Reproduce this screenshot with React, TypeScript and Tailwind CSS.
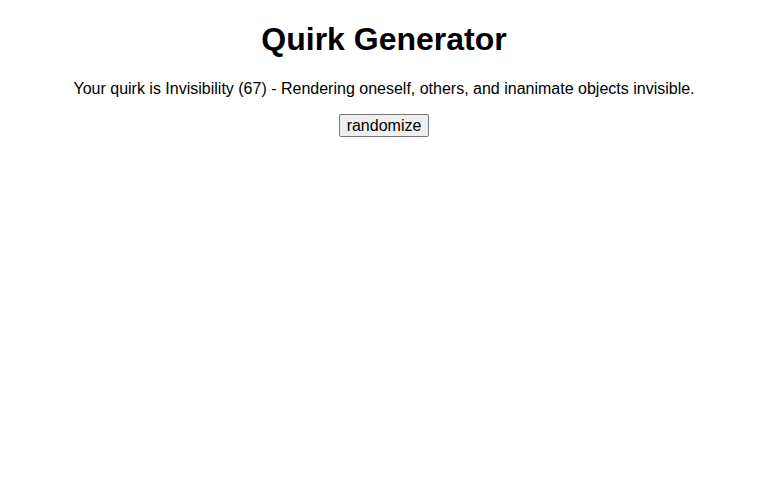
import { useState } from 'react';

const quirks = [
  { name: 'Invisibility', id: 67, desc: 'Rendering oneself, others, and inanimate objects invisible.' },
];

export default function App() {
  const [quirk, setQuirk] = useState(quirks[0]);

  const randomize = () => {
    setQuirk(quirks[Math.floor(Math.random() * quirks.length)]);
  };

  return (
    <div className="text-center text-black bg-white min-h-screen font-['Liberation_Sans',Arial,sans-serif]">
      <h1 className="text-[32px] leading-[37px] font-bold pt-[21px] mb-[21px]">Quirk Generator</h1>
      <p className="text-base leading-[19px] mb-4">
        Your quirk is {quirk.name} ({quirk.id}) - {quirk.desc}
      </p>
      <button
        onClick={randomize}
        className="text-base leading-[19px] px-[7px] py-[1px] bg-[#efefef] border border-[#767676] rounded-[2px] hover:bg-[#e5e5e5]"
      >
        randomize
      </button>
    </div>
  );
}
